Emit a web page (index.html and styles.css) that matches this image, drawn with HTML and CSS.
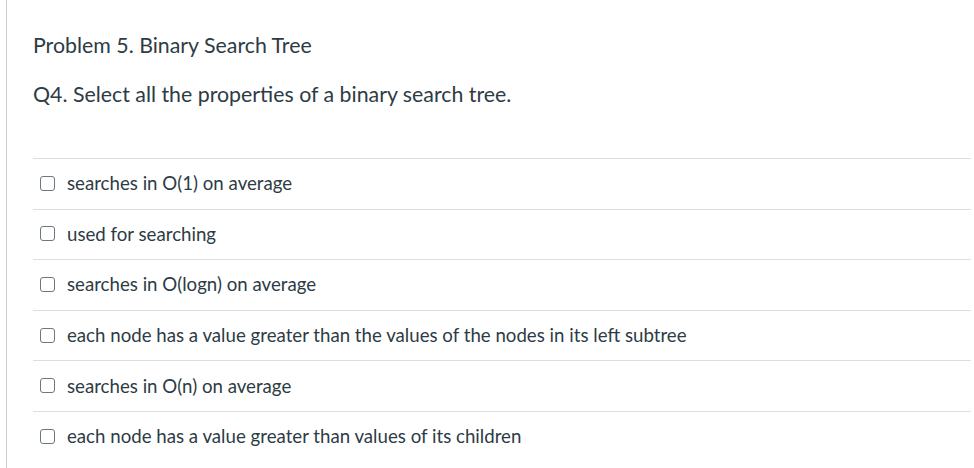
FILE: index.html
```html
<!DOCTYPE html>
<html lang="en">

<head>
    <meta charset="UTF-8">
    <meta name="viewport" content="width=device-width, initial-scale=1.0">
    <title>Problem 5. Binary Search Tree</title>
    <link rel="stylesheet" href="styles.css">
</head>

<body>
    <div class="quiz-panel">
        <div class="quiz-title">Problem 5. Binary Search Tree</div>
        <div class="quiz-question">Q4. Select all the properties of a binary search tree.</div>

        <!-- Варианты ответа -->
        <div class="answers">
            <label class="answer"><input type="checkbox" class="answer-box"><span>searches in O(1) on average</span></label>
            <label class="answer"><input type="checkbox" class="answer-box"><span>used for searching</span></label>
            <label class="answer"><input type="checkbox" class="answer-box"><span>searches in O(logn) on average</span></label>
            <label class="answer"><input type="checkbox" class="answer-box"><span>each node has a value greater than the values of the nodes in its left subtree</span></label>
            <label class="answer"><input type="checkbox" class="answer-box"><span>searches in O(n) on average</span></label>
            <label class="answer"><input type="checkbox" class="answer-box"><span>each node has a value greater than values of its children</span></label>
        </div>
    </div>
</body>

</html>
```

FILE: styles.css
```css
html, body {
    margin: 0;
    padding: 0;
    background: #ffffff;
}

.quiz-panel {
    margin-left: 6px;
    min-height: 468px;
    box-sizing: border-box;
    border-left: 1px solid #c7cdd1;
    padding: 33px 3px 0 26px;
    font-family: Lato, "Open Sans", sans-serif;
    color: #2d3b45;
}

.quiz-title {
    font-size: 21.33px;
    line-height: 24px;
}

.quiz-question {
    font-size: 21.33px;
    line-height: 24px;
    margin-top: 25px;
}

.answers {
    margin-top: 52px;
}

.answer {
    display: flex;
    align-items: center;
    gap: 12px;
    border-top: 1px solid #dcdfe1;
    padding: 14.3px 0 15.3px 7px;
    font-size: 18.67px;
    line-height: 20px;
}

/* Квадратик чекбокса */
.answer-box {
    appearance: none;
    -webkit-appearance: none;
    margin: 0;
    width: 15px;
    height: 15px;
    border: 1px solid #6b7780;
    border-radius: 3px;
    background: #ffffff;
    flex-shrink: 0;
}
```
